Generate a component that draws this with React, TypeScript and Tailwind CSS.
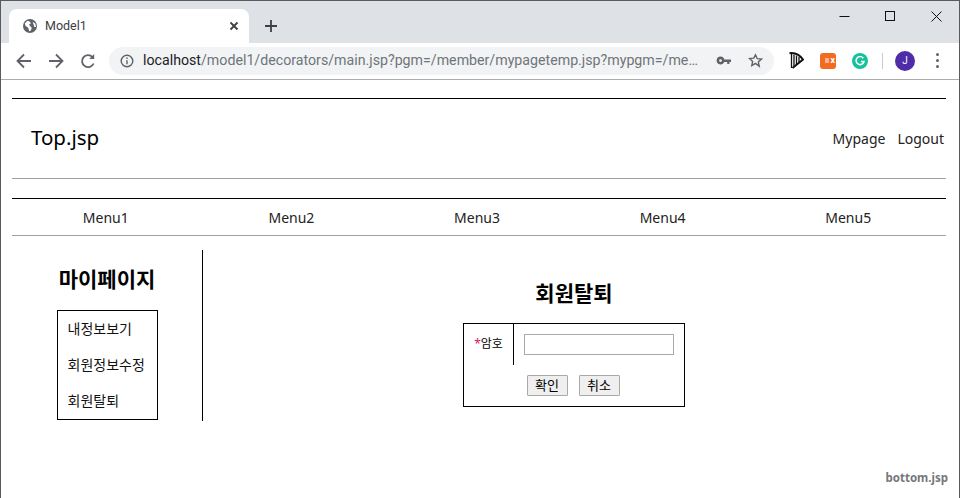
import React from "react";

const ui = "font-['Roboto','Noto_Sans_CJK_KR',sans-serif]";
const kr = "font-['Noto_Sans','Noto_Sans_CJK_KR',sans-serif]";

function Globe() {
  return (
    <svg width="14" height="14" viewBox="0 0 16 16">
      <circle cx="8" cy="8" r="8" fill="#5f6368" />
      <path d="M2 5l3-3 3 1 1 2-2 1 1 2 2 2-1 3-2 1-1-4-3-2zM11 3l3 2 1 4-2 0-1-3z" fill="#fff" />
    </svg>
  );
}

function Tab() {
  return (
    <div className="flex h-[34px] w-[240px] items-center rounded-t-[8px] bg-white pl-[14px] pr-[10px]">
      <Globe />
      <span className="ml-[8px] flex-1 text-[12.500px] text-[#3c4043]">Model1</span>
      <svg width="10" height="10" viewBox="0 0 10 10" stroke="#3c4043" strokeWidth="1.8">
        <path d="M1.500 1.500l7 7M8.500 1.500l-7 7" />
      </svg>
    </div>
  );
}

function WindowControls() {
  return (
    <div className="flex items-start">
      <div className="flex h-[30px] w-[46px] items-center justify-center">
        <svg width="11" height="10" viewBox="0 0 11 10" stroke="#111" strokeWidth="1"><path d="M0.500 5.500h10" /></svg>
      </div>
      <div className="flex h-[30px] w-[46px] items-center justify-center">
        <svg width="10" height="10" viewBox="0 0 10 10" stroke="#111" strokeWidth="1" fill="none"><rect x="0.500" y="0.500" width="9" height="9" /></svg>
      </div>
      <div className="flex h-[30px] w-[46px] items-center justify-center">
        <svg width="11" height="11" viewBox="0 0 11 11" stroke="#111" strokeWidth="1"><path d="M0.500 0.500l10 10M10.500 0.500l-10 10" /></svg>
      </div>
    </div>
  );
}

function TabStrip() {
  return (
    <div className="flex h-[42px] items-end justify-between bg-[#dee1e6] pl-[8px]">
      <div className="flex items-center">
        <Tab />
        <svg className="ml-[16px]" width="12" height="12" viewBox="0 0 12 12" stroke="#3c4043" strokeWidth="1.8">
          <path d="M6 0v12M0 6h12" />
        </svg>
      </div>
      <div className="self-start">
        <WindowControls />
      </div>
    </div>
  );
}

function NavIcons() {
  return (
    <div className="flex items-center gap-[16px] pl-[15px] pr-[13px]">
      <svg width="16" height="16" viewBox="0 0 16 16" fill="none" stroke="#5f6368" strokeWidth="1.8">
        <path d="M15 8H2M8 1.500L1.500 8 8 14.500" />
      </svg>
      <svg width="16" height="16" viewBox="0 0 16 16" fill="none" stroke="#5f6368" strokeWidth="1.8">
        <path d="M1 8h13M8 1.500L14.500 8 8 14.500" />
      </svg>
      <svg width="16" height="16" viewBox="0 0 16 16" fill="none" stroke="#5f6368" strokeWidth="1.8">
        <path d="M13.600 10.500A6 6 0 1 1 12.400 4" />
        <path d="M14.200 1v5h-5z" fill="#5f6368" stroke="none" />
      </svg>
    </div>
  );
}

function AddressBar() {
  return (
    <div className="flex h-[28px] w-[665px] items-center rounded-full bg-[#f1f3f4] pl-[11px] pr-[10px]">
      <svg width="14" height="14" viewBox="0 0 14 14" fill="none" stroke="#5f6368" strokeWidth="1.4">
        <circle cx="7" cy="7" r="5.800" />
        <path d="M7 6.200v4M7 3.600v1.400" />
      </svg>
      <span className="ml-[9px] w-[556px] truncate text-[14.200px] text-[#70757a]">
        <span className="text-[#202124]">localhost</span>/model1/decorators/main.jsp?pgm=/member/mypagetemp.jsp?mypgm=/me...
      </span>
      <svg className="ml-[17px]" width="15" height="10" viewBox="0 0 15 10" fill="#5f6368">
        <path d="M4.500 0.500a4 4 0 0 1 3.800 3H15v2.600h-1.600V8h-2.200V6.100H8.300a4 4 0 1 1-3.800-5.600zm0 2.700a1.400 1.400 0 1 0 0 2.800 1.400 1.400 0 0 0 0-2.800z" />
      </svg>
      <svg className="ml-[17px]" width="15" height="15" viewBox="0 0 24 24" fill="none" stroke="#5f6368" strokeWidth="2.200">
        <path d="M12 2.800l2.800 6.300 6.800.7-5.100 4.600 1.500 6.800L12 16.700l-6 3.500 1.500-6.800-5.100-4.600 6.800-.7z" />
      </svg>
    </div>
  );
}

function Extensions() {
  return (
    <div className="ml-[15px] flex items-center">
      <svg width="15" height="17" viewBox="0 0 15 17" fill="none" stroke="#111">
        <path d="M0.500 1.200c5-.8 10 1.500 13.500 6.300L3.500 16" strokeWidth="2" />
        <path d="M2.500 2v14M5 2.500v11.500M7.500 3.500v8.500M10 5v5" strokeWidth="1.300" />
      </svg>
      <div className="ml-[16px] flex h-[16px] w-[16px] items-center justify-end rounded-[3px] bg-[#f26b21] pr-[1px] text-[9px] font-bold leading-none text-white">
        <span className="mr-[1px] h-[5px] w-[4px] bg-[#f9b48f]" />x
      </div>
      <div className="ml-[16px] flex h-[16px] w-[16px] items-center justify-center rounded-full bg-[#15c39a]">
        <svg width="10" height="10" viewBox="0 0 10 10" fill="none" stroke="#fff" strokeWidth="1.500">
          <path d="M8.300 2.200A4 4 0 1 0 9 5.500H6" />
        </svg>
      </div>
      <div className="ml-[14px] h-[16px] w-[1px] bg-[#c8cacd]" />
      <div className="ml-[12px] flex h-[20px] w-[20px] items-center justify-center rounded-full bg-[#4f2ca8] text-[10px] text-white">J</div>
      <div className="ml-[21px] flex flex-col gap-[3px]">
        <span className="h-[3px] w-[3px] rounded-full bg-[#5f6368]" />
        <span className="h-[3px] w-[3px] rounded-full bg-[#5f6368]" />
        <span className="h-[3px] w-[3px] rounded-full bg-[#5f6368]" />
      </div>
    </div>
  );
}

function Toolbar() {
  return (
    <div className="flex h-[37px] items-center border-b border-[#ababab] bg-white pb-[1px]">
      <NavIcons />
      <AddressBar />
      <Extensions />
    </div>
  );
}

function PageHeader() {
  return (
    <div className="flex h-[81px] items-center justify-between border-y border-t-black border-b-[#a0a0a0] pb-[1px] pl-[19px] pr-[2px]">
      <span className="-mt-[2px] text-[20.500px] text-black">Top.jsp</span>
      <div className="flex gap-[12px] text-[14px] text-[#222]">
        <span>Mypage</span>
        <span>Logout</span>
      </div>
    </div>
  );
}

function MainMenu() {
  return (
    <div className="mt-[19px] h-[38px] border-y border-t-black border-b-[#a0a0a0] pl-[1px] text-[14px] text-[#222]">
      <div className="grid h-full w-[928px] grid-cols-5 items-center text-center">
        <span>Menu1</span>
        <span>Menu2</span>
        <span>Menu3</span>
        <span>Menu4</span>
        <span>Menu5</span>
      </div>
    </div>
  );
}

function Sidebar() {
  return (
    <aside className="flex h-[171px] w-[191px] flex-col items-center border-r border-black">
      <h2 className="mt-[16px] h-[27px] text-[21px] font-bold leading-[27px] text-black">마이페이지</h2>
      <ul className="mt-[17px] flex h-[110px] w-[101px] flex-col gap-[17px] border border-black pl-[10px] pt-[8px] text-[14px] leading-[19px] text-[#111]">
        <li>내정보보기</li>
        <li>회원정보수정</li>
        <li>회원탈퇴</li>
      </ul>
    </aside>
  );
}

function Withdraw() {
  return (
    <section className="flex flex-1 flex-col items-center pr-[1px]">
      <h2 className="mt-[28px] h-[30px] text-[21px] font-bold leading-[30px] text-black">회원탈퇴</h2>
      <div className="mt-[15px] h-[84px] w-[222px] border border-black">
        <div className="flex h-[41px]">
          <div className="flex w-[50px] items-center justify-center border-r border-black pb-[1px] text-[12px]">
            <span className="text-[#e0115f]">*</span>
            <span className="text-black">암호</span>
          </div>
          <div className="pl-[10px] pt-[10px]">
            <input type="text" className="block h-[21px] w-[150px] border border-[#a9a9a9] bg-white" />
          </div>
        </div>
        <div className="mt-[10px] flex justify-center gap-[11px] pr-[2px]">
          <button className="h-[21px] w-[41px] rounded-[1px] border border-[#a9a9a9] bg-[#efefef] text-[13px] leading-none text-black">확인</button>
          <button className="h-[21px] w-[41px] rounded-[1px] border border-[#a9a9a9] bg-[#efefef] text-[13px] leading-none text-black">취소</button>
        </div>
      </div>
    </section>
  );
}

export default function App() {
  return (
    <div className="flex h-[498px] w-[960px] flex-col overflow-hidden border-x border-t border-[#5a5a5a] bg-white">
      <div className={ui}>
        <TabStrip />
        <Toolbar />
      </div>
      <main className={`flex flex-1 flex-col pl-[11px] pr-[13px] pt-[18px] ${kr}`}>
        <PageHeader />
        <MainMenu />
        <div className="mt-[14px] flex">
          <Sidebar />
          <Withdraw />
        </div>
        <footer className="-mr-[2px] mt-auto pb-[12px] text-right text-[11.500px] font-bold leading-[16px] text-[#777]">
          bottom.jsp
        </footer>
      </main>
    </div>
  );
}
